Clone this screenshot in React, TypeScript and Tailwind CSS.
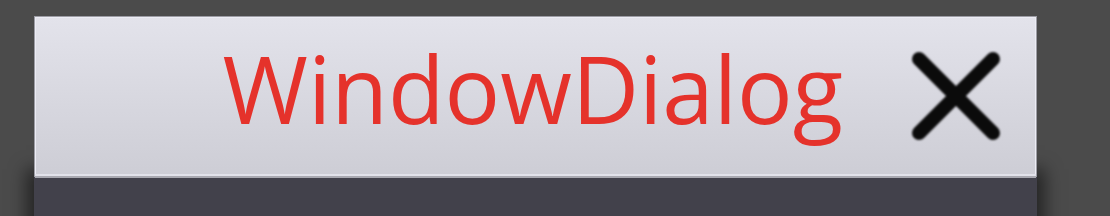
export default function App() {
  return (
    <div className="w-[1110px] h-[216px] bg-[#4b4b4b] overflow-hidden pt-[16px]">
      <div className="ml-[34px] w-[1003px] flex flex-col">
        {/* Title bar */}
        <div className="relative z-10 h-[161px] border border-[#9c9ca4] border-b-0 bg-gradient-to-b from-[#e3e3eb] to-[#cdcdd5] shadow-[inset_1px_1px_0_#ececf4,inset_-1px_0_0_#ececf4]">
          <div className="flex items-center justify-end h-[157px] pr-[33px]">
            <span
              className="text-[#e5322b] text-[92.5px] leading-none mr-[66px] -mt-[15px]"
              style={{ fontFamily: '"Open Sans", "Noto Sans", sans-serif' }}
            >
              WindowDialog
            </span>
            <svg width="94" height="94" viewBox="0 0 94 94" className="blur-[0.8px] mt-[1px]">
              <path
                d="M10 10 L84 84 M84 10 L10 84"
                stroke="#0b0b0b"
                strokeWidth="14"
                strokeLinecap="round"
              />
            </svg>
          </div>
          <div className="h-[2px] bg-[#e2e2ea]" />
          <div className="h-[2px] bg-[#a9a9b1]" />
        </div>
        {/* Dialog body */}
        <div className="h-[60px] bg-[#42414b] shadow-[0_0_16px_8px_rgba(0,0,0,0.5)]" />
      </div>
    </div>
  );
}
